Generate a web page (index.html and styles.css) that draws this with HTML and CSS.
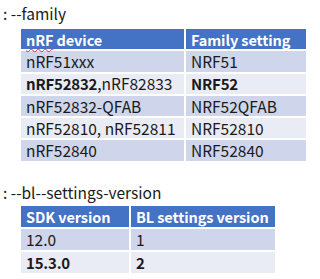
FILE: index.html
```html
<!DOCTYPE html>
<html>
<head>
<meta charset="utf-8">
<link rel="stylesheet" href="styles.css">
</head>
<body>
<div class="label first">: --family</div>
<table class="tbl fam">
  <thead>
    <tr><th class="c1"><span class="sq">nRF</span> device</th><th>Family setting</th></tr>
  </thead>
  <tbody>
    <tr class="odd"><td>nRF51xxx</td><td>NRF51</td></tr>
    <tr class="even"><td><b>nRF52832</b>,nRF82833</td><td><b>NRF52</b></td></tr>
    <tr class="odd"><td>nRF52832-QFAB</td><td>NRF52QFAB</td></tr>
    <tr class="even"><td>nRF52810, nRF52811</td><td>NRF52810</td></tr>
    <tr class="odd"><td>nRF52840</td><td>NRF52840</td></tr>
  </tbody>
</table>
<div class="label second">: --bl--settings-version</div>
<table class="tbl bl">
  <thead>
    <tr><th class="c1">SDK version</th><th>BL settings version</th></tr>
  </thead>
  <tbody>
    <tr class="odd"><td>12.0</td><td>1</td></tr>
    <tr class="even"><td><b>15.3.0</b></td><td><b>2</b></td></tr>
  </tbody>
</table>
</body>
</html>
```
FILE: styles.css
```css
html, body {
  margin: 0;
  padding: 0;
  background: #ffffff;
}
body {
  font-family: "Noto Sans CJK KR", "Noto Sans", sans-serif;
  font-size: 15.5px;
  color: #1a1a1a;
}
.label {
  padding-left: 3px;
  line-height: 20px;
  height: 20px;
}
.first {
  margin-top: 3px;
  margin-bottom: 4px;
}
.second {
  margin-top: 19px;
  margin-bottom: 2px;
}
.tbl {
  margin-left: 19px;
  border-collapse: collapse;
  table-layout: fixed;
}
.fam { width: 289px; }
.fam .c1 { width: 158px; }
.bl { width: 258px; }
.bl .c1 { width: 103px; }
.tbl th, .tbl td {
  border: 2px solid #ffffff;
  height: 20.3px;
  padding: 0 0 0 5px;
  text-align: left;
  white-space: nowrap;
  line-height: 19px;
}
.bl th, .bl td {
  height: 21px;
}
.tbl th {
  background: #4472c4;
  color: #ffffff;
  font-weight: bold;
  font-size: 14.5px;
  letter-spacing: -0.1px;
}
.tbl tr.odd td { background: #cfd5ea; }
.tbl tr.even td { background: #e9ebf5; }
.tbl b {
  font-weight: bold;
  font-size: 15px;
  letter-spacing: -0.2px;
}
.sq {
  text-decoration: underline wavy #e03030;
  text-decoration-thickness: 1px;
  text-underline-offset: 2px;
}
```
